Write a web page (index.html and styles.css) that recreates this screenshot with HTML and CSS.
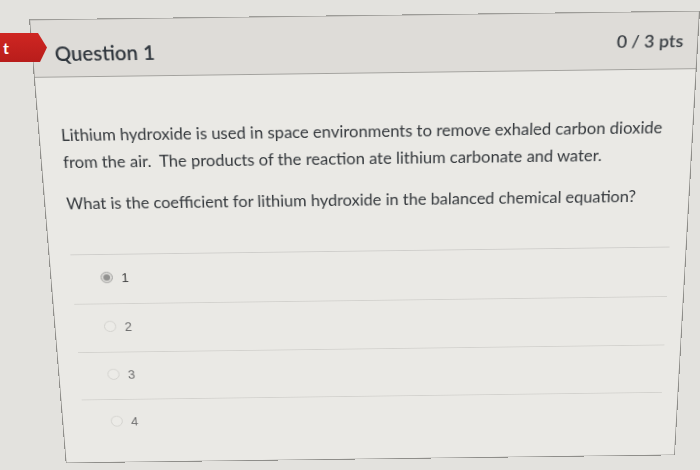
FILE: index.html
```html
<!DOCTYPE html>
<html lang="en">
<head>
<meta charset="utf-8">
<title>Question 1</title>
<link rel="stylesheet" href="styles.css">
</head>
<body>
<div class="stage">
  <div class="card">
    <div class="card-header">
      <h2 class="q-name">Question 1</h2>
      <div class="q-points">0 / 3 pts</div>
    </div>
    <div class="card-body">
      <div class="q-text">
        <p>Lithium hydroxide is used in space environments to remove exhaled carbon dioxide from the air.&nbsp; The products of the reaction ate lithium carbonate and water.</p>
        <p>What is the coefficient for lithium hydroxide in the balanced chemical equation?</p>
      </div>
      <div class="answers">
        <label class="answer selected"><span class="radio"></span><span class="a-text">1</span></label>
        <label class="answer"><span class="radio"></span><span class="a-text">2</span></label>
        <label class="answer"><span class="radio"></span><span class="a-text">3</span></label>
        <label class="answer"><span class="radio"></span><span class="a-text">4</span></label>
      </div>
    </div>
  </div>
  <div class="status-tab">t</div>
</div>
</body>
</html>
```

FILE: styles.css
```css
html, body {
  margin: 0;
  padding: 0;
}
body {
  width: 700px;
  height: 470px;
  overflow: hidden;
  background: #e3e2de;
  font-family: Lato, "Open Sans", "Liberation Sans", sans-serif;
}
.stage {
  position: relative;
  width: 700px;
  height: 470px;
  overflow: hidden;
  padding-top: 15px;
  box-sizing: border-box;
}
.card {
  margin-left: 29px;
  width: 671px;
  box-sizing: border-box;
  transform-origin: 50% 0;
  transform: perspective(800px) rotate(-0.75deg) rotateX(-9.4deg);
  background: #eae9e5;
  border: 1px solid #8f8e8a;
  border-top-color: #9d9c98;
}
.card-header {
  height: 59px;
  box-sizing: border-box;
  background: #dedcd8;
  border-bottom: 1px solid #a3a29e;
  display: flex;
  justify-content: space-between;
  align-items: flex-start;
  padding: 0 14px 0 22px;
}
.q-name {
  margin: 0;
  padding-top: 21px;
  font-size: 20.5px;
  line-height: 26px;
  font-weight: 600;
  color: #2f363d;
}
.q-points {
  padding-top: 17px;
  font-size: 18px;
  line-height: 24px;
  font-weight: 600;
  color: #3b4045;
}
.card-body {
  padding: 47px 17px 19px 22px;
}
.q-text {
  font-size: 17px;
  line-height: 28.5px;
  color: #35393d;
}
.q-text p {
  margin: 0 0 17px 0;
}
.q-text p:last-child {
  margin-bottom: 41px;
}
.answers {
  border-top: 1px solid #cfcecb;
}
.answer {
  display: flex;
  height: 56px;
  box-sizing: border-box;
  padding: 18px 0 0 30px;
  align-items: flex-start;
  border-bottom: 1px solid #d3d2ce;
  font-family: "Liberation Sans", Arial, sans-serif;
  font-size: 14px;
  line-height: 16px;
  color: #707070;
}
.answer:last-child {
  border-bottom: none;
}
.radio {
  width: 13px;
  height: 13px;
  box-sizing: border-box;
  border-radius: 50%;
  border: 1px solid #d2d1cd;
  background: #ecebe7;
  margin: 1px 9px 0 0;
  display: flex;
  align-items: center;
  justify-content: center;
}
.answer.selected .radio {
  border-color: #a3a3a1;
  background: #d9d8d5;
}
.answer.selected .radio::after {
  content: "";
  width: 7px;
  height: 7px;
  border-radius: 50%;
  background: #929290;
}
.answer.selected {
  color: #3e3e3e;
}
.status-tab {
  position: absolute;
  left: 0;
  top: 33px;
  width: 47px;
  height: 29px;
  background: linear-gradient(#cf2622, #b81d1b);
  clip-path: polygon(0 0, 38px 0, 47px 50%, 40px 100%, 0 100%);
  color: #fff;
  font-weight: 700;
  font-size: 16px;
  line-height: 29px;
  padding-left: 3px;
  box-sizing: border-box;
  z-index: 2;
}
```
